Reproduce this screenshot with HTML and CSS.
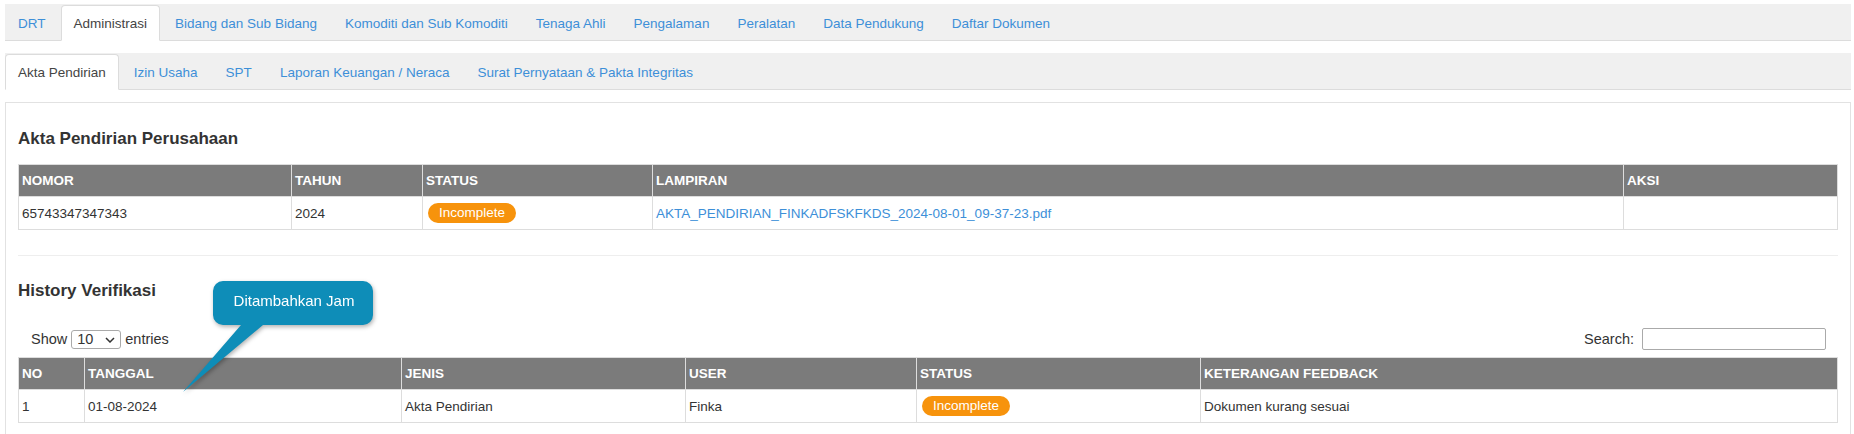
FILE: index.html
```html
<!DOCTYPE html>
<html lang="id">
<head>
<meta charset="utf-8">
<title>Administrasi - Akta Pendirian</title>
<link rel="stylesheet" href="styles.css">
</head>
<body>
<div class="page">
  <nav class="tabs">
    <a class="tab" href="#">DRT</a>
    <a class="tab active" href="#">Administrasi</a>
    <a class="tab" href="#">Bidang dan Sub Bidang</a>
    <a class="tab" href="#">Komoditi dan Sub Komoditi</a>
    <a class="tab" href="#">Tenaga Ahli</a>
    <a class="tab" href="#">Pengalaman</a>
    <a class="tab" href="#">Peralatan</a>
    <a class="tab" href="#">Data Pendukung</a>
    <a class="tab" href="#">Daftar Dokumen</a>
  </nav>
  <nav class="tabs tabs-sub">
    <a class="tab active" href="#">Akta Pendirian</a>
    <a class="tab" href="#">Izin Usaha</a>
    <a class="tab" href="#">SPT</a>
    <a class="tab" href="#">Laporan Keuangan / Neraca</a>
    <a class="tab" href="#">Surat Pernyataan &amp; Pakta Integritas</a>
  </nav>

  <section class="panel">
    <h3 class="section-title">Akta Pendirian Perusahaan</h3>
    <table class="grid">
      <colgroup>
        <col class="c-nomor"><col class="c-tahun"><col class="c-status"><col class="c-lampiran"><col>
      </colgroup>
      <thead>
        <tr><th>NOMOR</th><th>TAHUN</th><th>STATUS</th><th>LAMPIRAN</th><th>AKSI</th></tr>
      </thead>
      <tbody>
        <tr>
          <td>65743347347343</td>
          <td>2024</td>
          <td><span class="badge">Incomplete</span></td>
          <td><a class="link" href="#">AKTA_PENDIRIAN_FINKADFSKFKDS_2024-08-01_09-37-23.pdf</a></td>
          <td></td>
        </tr>
      </tbody>
    </table>

    <hr class="divider">

    <h3 class="section-title">History Verifikasi</h3>
    <div class="dt-controls">
      <label class="dt-length">Show
        <span class="select-wrap">
          <select class="dt-select"><option>10</option><option>25</option><option>50</option><option>100</option></select>
          <svg class="chev" width="10" height="6" viewBox="0 0 10 6"><path d="M1 1 L5 5 L9 1" fill="none" stroke="#333" stroke-width="1.5"/></svg>
        </span>
        entries</label>
      <label class="dt-filter">Search: <input class="dt-input" type="search"></label>
    </div>
    <table class="grid">
      <colgroup>
        <col class="h-no"><col class="h-tgl"><col class="h-jenis"><col class="h-user"><col class="h-status"><col>
      </colgroup>
      <thead>
        <tr><th>NO</th><th>TANGGAL</th><th>JENIS</th><th>USER</th><th>STATUS</th><th>KETERANGAN FEEDBACK</th></tr>
      </thead>
      <tbody>
        <tr>
          <td>1</td>
          <td>01-08-2024</td>
          <td>Akta Pendirian</td>
          <td>Finka</td>
          <td><span class="badge">Incomplete</span></td>
          <td>Dokumen kurang sesuai</td>
        </tr>
      </tbody>
    </table>

    <div class="callout">
      <svg class="callout-shape" width="204" height="120" viewBox="0 0 204 120">
        <path d="M45 2 H185 A10 10 0 0 1 195 12 V36 A10 10 0 0 1 185 46 H85 L5 113 L63 46 H45 A10 10 0 0 1 35 36 V12 A10 10 0 0 1 45 2 Z" fill="#0e8db8"/>
        <text x="116" y="27" text-anchor="middle" class="callout-text">Ditambahkan Jam</text>
      </svg>
    </div>
  </section>
</div>
</body>
</html>
```
FILE: styles.css
```css
* { box-sizing: border-box; }

html, body {
  margin: 0;
  background: #fff;
}

body {
  font-family: "Liberation Sans", Arial, sans-serif;
  font-size: 13.5px;
  color: #333;
}

.page {
  padding: 4px 3px 0 5px;
}

/* ---------- tabs ---------- */
.tabs {
  display: flex;
  align-items: flex-end;
  height: 37px;
  background: #f0f0f0;
  border-bottom: 1px solid #dcdcdc;
}

.tabs-sub {
  margin-top: 12px;
}

.tab {
  display: flex;
  align-items: center;
  height: 36px;
  padding: 0 12px;
  margin-right: 2px;
  margin-bottom: -1px;
  border: 1px solid transparent;
  border-radius: 4px 4px 0 0;
  color: #3d8fd8;
  text-decoration: none;
  white-space: nowrap;
}

.tab.active {
  background: #fff;
  color: #444;
  border-color: #dcdcdc #dcdcdc #fff;
}

/* ---------- panel ---------- */
.panel {
  position: relative;
  margin-top: 12px;
  border: 1px solid #e2e2e2;
  border-bottom: 0;
  padding: 26px 12px 40px;
  min-height: 340px;
}

.section-title {
  margin: 0;
  font-size: 17px;
  line-height: 20px;
  font-weight: bold;
  color: #333;
}

.panel > .grid:first-of-type {
  margin-top: 15px;
}

/* ---------- tables ---------- */
.grid {
  width: 100%;
  border-collapse: collapse;
  table-layout: fixed;
}

.grid th,
.grid td {
  border: 1px solid #dddddd;
  padding: 6px 3px;
  line-height: 19px;
  text-align: left;
  vertical-align: middle;
  white-space: nowrap;
  overflow: visible;
}

.grid th {
  background: #7b7b7b;
  color: #fff;
  font-weight: bold;
}

.grid td {
  color: #333;
}

.c-nomor { width: 273px; }
.c-tahun { width: 131px; }
.c-status { width: 230px; }
.c-lampiran { width: 971px; }

.h-no { width: 66px; }
.h-tgl { width: 317px; }
.h-jenis { width: 284px; }
.h-user { width: 231px; }
.h-status { width: 284px; }

.link {
  color: #3d8fd8;
  text-decoration: none;
}

.badge {
  display: inline-block;
  height: 20px;
  line-height: 20px;
  padding: 0 11px;
  border-radius: 10px;
  background: #f7930c;
  color: #fff;
  margin-left: 2px;
}

.divider {
  margin: 25px 0 25px;
  border: 0;
  border-top: 1px solid #eeeeee;
  height: 0;
}

/* ---------- datatable controls ---------- */
.dt-controls {
  display: flex;
  justify-content: space-between;
  align-items: center;
  height: 24px;
  margin: 26px 0 6px;
  padding: 0 12px 0 13px;
  font-size: 14.5px;
}

.dt-length,
.dt-filter {
  display: flex;
  align-items: center;
  color: #333;
}

.select-wrap {
  position: relative;
  display: inline-block;
  margin: 0 4px 0 4px;
}

.dt-select {
  -webkit-appearance: none;
  appearance: none;
  width: 50px;
  height: 19px;
  padding: 0 0 0 5px;
  border: 1px solid #aaa;
  border-radius: 3px;
  background: #fff;
  font-family: inherit;
  font-size: 14.5px;
  color: #333;
  display: block;
}

.chev {
  position: absolute;
  right: 6px;
  top: 7px;
  pointer-events: none;
}

.dt-input {
  width: 184px;
  height: 22px;
  margin-left: 8px;
  border: 1px solid #aaa;
  border-radius: 2px;
  background: #fff;
  padding: 2px 4px;
}

/* ---------- callout ---------- */
.callout {
  position: absolute;
  left: 172px;
  top: 176px;
  width: 204px;
  height: 120px;
  pointer-events: none;
}

.callout-shape {
  display: block;
  filter: drop-shadow(1px 2px 2px rgba(0, 0, 0, 0.3));
}

.callout-text {
  fill: #fff;
  font-family: "Liberation Sans", Arial, sans-serif;
  font-size: 15px;
}
```
